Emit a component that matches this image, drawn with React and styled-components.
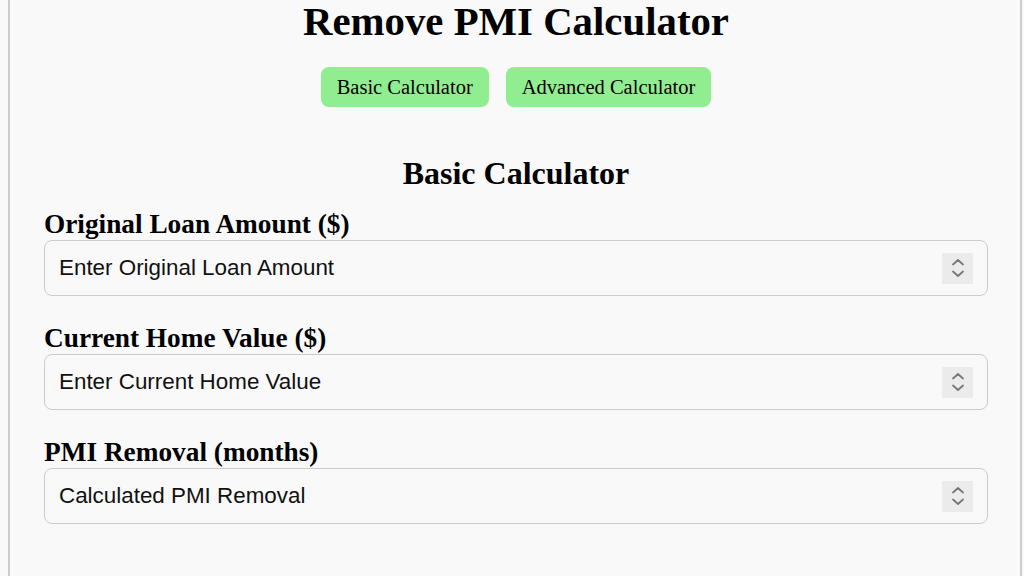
import React, { useState } from "react";
import styled, { createGlobalStyle } from "styled-components";

const GlobalStyle = createGlobalStyle`
  html, body {
    margin: 0;
    background: #f9f9f9;
  }
  body {
    padding: 0 2px 0 8px;
  }
  * {
    box-sizing: border-box;
  }
`;

const Page = styled.main`
  min-height: 100vh;
  border-left: 2px solid #cccccc;
  border-right: 2px solid #cccccc;
  padding: 0 32px 40px 34px;
  font-family: "Liberation Serif", "Times New Roman", serif;
  color: #000;
`;

const Title = styled.h1`
  margin: 0;
  font-size: 40.8px;
  line-height: 44px;
  font-weight: bold;
  text-align: center;
`;

const TabRow = styled.div`
  display: flex;
  justify-content: center;
  gap: 17px;
  margin-top: 23px;
`;

const TabButton = styled.button`
  font-family: "Liberation Serif", "Times New Roman", serif;
  font-size: 20.5px;
  line-height: 23px;
  padding: 8.5px 16px;
  border: none;
  border-radius: 8px;
  background: ${(p) => (p.$active ? "#90ee90" : "#90ee90")};
  color: #000;
  cursor: pointer;
`;

const SectionTitle = styled.h2`
  margin: 48px 0 17px;
  font-size: 32px;
  font-weight: bold;
  text-align: center;
`;

const Form = styled.form`
  display: flex;
  flex-direction: column;
  gap: 27px;
`;

const Field = styled.div`
  display: flex;
  flex-direction: column;
`;

const Label = styled.label`
  font-size: 27.3px;
  font-weight: bold;
  line-height: 31px;
`;

const InputBox = styled.div`
  display: flex;
  align-items: center;
  height: 56px;
  padding: 0 14px;
  border: 1px solid #cccccc;
  border-radius: 8px;
  background: #f9f9f9;
`;

const Input = styled.input`
  flex: 1;
  min-width: 0;
  border: none;
  outline: none;
  background: transparent;
  padding: 0;
  font-family: "Liberation Sans", Arial, sans-serif;
  font-size: 22.4px;
  color: #000;

  &::placeholder {
    color: #111;
    opacity: 1;
  }
`;

const Spinner = styled.span`
  display: flex;
  align-items: center;
  justify-content: center;
  width: 31px;
  height: 31px;
  background: #ebebeb;
  flex-shrink: 0;
`;

const SpinIcon = () => (
  <svg width="18" height="26" viewBox="0 0 18 26" fill="none">
    <path d="M4 9.5 L9 5 L14 9.5" stroke="#777777" strokeWidth="1.8" strokeLinecap="round" strokeLinejoin="round" />
    <path d="M4 16.5 L9 21 L14 16.5" stroke="#777777" strokeWidth="1.8" strokeLinecap="round" strokeLinejoin="round" />
  </svg>
);

const fields = [
  { id: "loan", label: "Original Loan Amount ($)", placeholder: "Enter Original Loan Amount" },
  { id: "value", label: "Current Home Value ($)", placeholder: "Enter Current Home Value" },
  { id: "pmi", label: "PMI Removal (months)", placeholder: "Calculated PMI Removal" },
];

const App = () => {
  const [mode, setMode] = useState("basic");

  return (
    <>
      <GlobalStyle />
      <Page>
        <Title>Remove PMI Calculator</Title>
        <TabRow>
          <TabButton $active={mode === "basic"} onClick={() => setMode("basic")}>
            Basic Calculator
          </TabButton>
          <TabButton $active={mode === "advanced"} onClick={() => setMode("advanced")}>
            Advanced Calculator
          </TabButton>
        </TabRow>

        <SectionTitle>Basic Calculator</SectionTitle>
        <Form onSubmit={(e) => e.preventDefault()}>
          {fields.map((f) => (
            <Field key={f.id}>
              <Label htmlFor={f.id}>{f.label}</Label>
              <InputBox>
                <Input id={f.id} type="text" inputMode="decimal" placeholder={f.placeholder} />
                <Spinner>
                  <SpinIcon />
                </Spinner>
              </InputBox>
            </Field>
          ))}
        </Form>
      </Page>
    </>
  );
};

export default App;
